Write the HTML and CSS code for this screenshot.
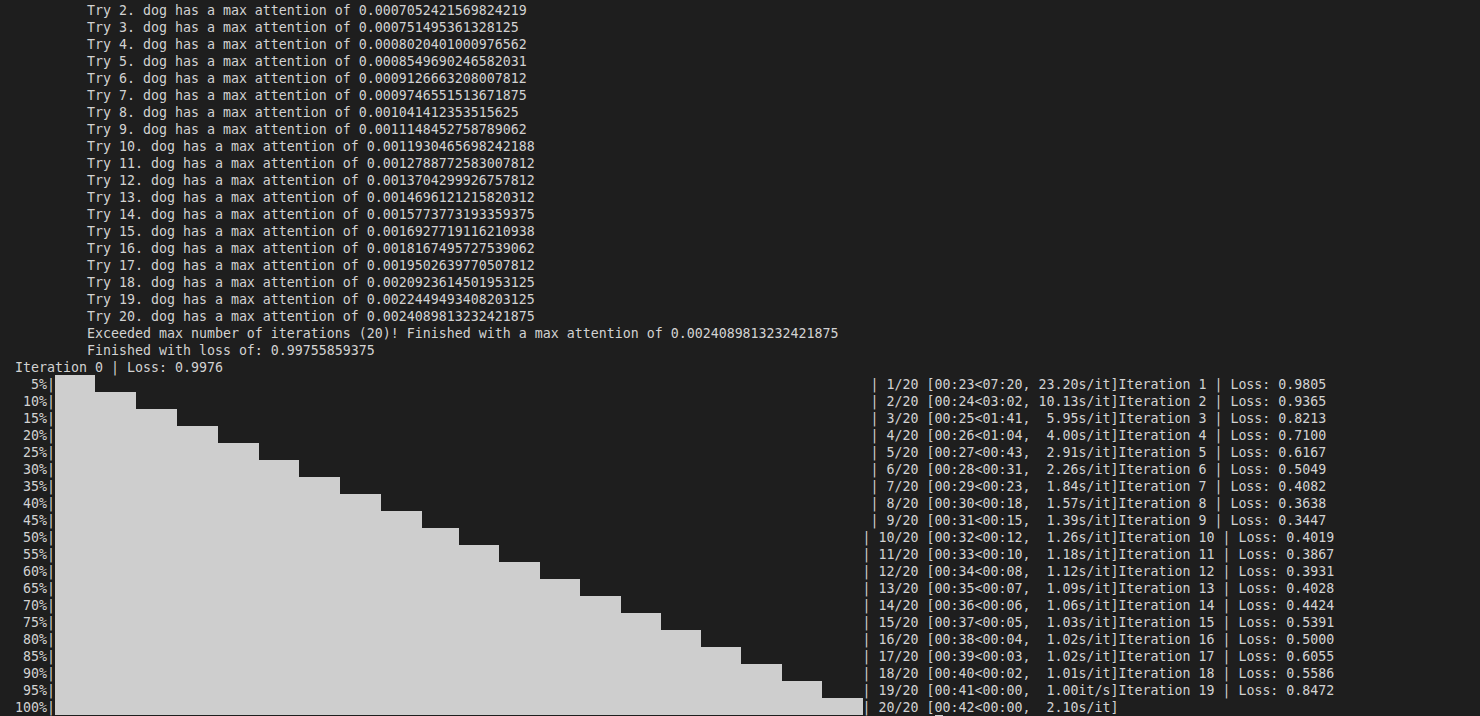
FILE: index.html
```html
<!DOCTYPE html>
<html>
<head>
<meta charset="utf-8">
<link rel="stylesheet" href="styles.css">
</head>
<body>
<div class="term">
<div class="ln ind">Try 2. dog has a max attention of 0.0007052421569824219</div>
<div class="ln ind">Try 3. dog has a max attention of 0.000751495361328125</div>
<div class="ln ind">Try 4. dog has a max attention of 0.0008020401000976562</div>
<div class="ln ind">Try 5. dog has a max attention of 0.0008549690246582031</div>
<div class="ln ind">Try 6. dog has a max attention of 0.0009126663208007812</div>
<div class="ln ind">Try 7. dog has a max attention of 0.0009746551513671875</div>
<div class="ln ind">Try 8. dog has a max attention of 0.001041412353515625</div>
<div class="ln ind">Try 9. dog has a max attention of 0.0011148452758789062</div>
<div class="ln ind">Try 10. dog has a max attention of 0.0011930465698242188</div>
<div class="ln ind">Try 11. dog has a max attention of 0.0012788772583007812</div>
<div class="ln ind">Try 12. dog has a max attention of 0.0013704299926757812</div>
<div class="ln ind">Try 13. dog has a max attention of 0.0014696121215820312</div>
<div class="ln ind">Try 14. dog has a max attention of 0.0015773773193359375</div>
<div class="ln ind">Try 15. dog has a max attention of 0.0016927719116210938</div>
<div class="ln ind">Try 16. dog has a max attention of 0.0018167495727539062</div>
<div class="ln ind">Try 17. dog has a max attention of 0.0019502639770507812</div>
<div class="ln ind">Try 18. dog has a max attention of 0.0020923614501953125</div>
<div class="ln ind">Try 19. dog has a max attention of 0.0022449493408203125</div>
<div class="ln ind">Try 20. dog has a max attention of 0.0024089813232421875</div>
<div class="ln ind">Exceeded max number of iterations (20)! Finished with a max attention of 0.0024089813232421875</div>
<div class="ln ind">Finished with loss of: 0.99755859375</div>
<div class="ln">Iteration 0 | Loss: 0.9976</div>
<div class="pr"><span class="tx">  5%|</span><span class="bar b102"><span class="fill" style="width:5ch"></span></span><span class="tx">| 1/20 [00:23&lt;07:20, 23.20s/it]Iteration 1 | Loss: 0.9805</span></div>
<div class="pr"><span class="tx"> 10%|</span><span class="bar b102"><span class="fill" style="width:10.125ch"></span></span><span class="tx">| 2/20 [00:24&lt;03:02, 10.13s/it]Iteration 2 | Loss: 0.9365</span></div>
<div class="pr"><span class="tx"> 15%|</span><span class="bar b102"><span class="fill" style="width:15.25ch"></span></span><span class="tx">| 3/20 [00:25&lt;01:41,  5.95s/it]Iteration 3 | Loss: 0.8213</span></div>
<div class="pr"><span class="tx"> 20%|</span><span class="bar b102"><span class="fill" style="width:20.375ch"></span></span><span class="tx">| 4/20 [00:26&lt;01:04,  4.00s/it]Iteration 4 | Loss: 0.7100</span></div>
<div class="pr"><span class="tx"> 25%|</span><span class="bar b102"><span class="fill" style="width:25.5ch"></span></span><span class="tx">| 5/20 [00:27&lt;00:43,  2.91s/it]Iteration 5 | Loss: 0.6167</span></div>
<div class="pr"><span class="tx"> 30%|</span><span class="bar b102"><span class="fill" style="width:30.5ch"></span></span><span class="tx">| 6/20 [00:28&lt;00:31,  2.26s/it]Iteration 6 | Loss: 0.5049</span></div>
<div class="pr"><span class="tx"> 35%|</span><span class="bar b102"><span class="fill" style="width:35.625ch"></span></span><span class="tx">| 7/20 [00:29&lt;00:23,  1.84s/it]Iteration 7 | Loss: 0.4082</span></div>
<div class="pr"><span class="tx"> 40%|</span><span class="bar b102"><span class="fill" style="width:40.75ch"></span></span><span class="tx">| 8/20 [00:30&lt;00:18,  1.57s/it]Iteration 8 | Loss: 0.3638</span></div>
<div class="pr"><span class="tx"> 45%|</span><span class="bar b102"><span class="fill" style="width:45.875ch"></span></span><span class="tx">| 9/20 [00:31&lt;00:15,  1.39s/it]Iteration 9 | Loss: 0.3447</span></div>
<div class="pr"><span class="tx"> 50%|</span><span class="bar b101"><span class="fill" style="width:50.5ch"></span></span><span class="tx">| 10/20 [00:32&lt;00:12,  1.26s/it]Iteration 10 | Loss: 0.4019</span></div>
<div class="pr"><span class="tx"> 55%|</span><span class="bar b101"><span class="fill" style="width:55.5ch"></span></span><span class="tx">| 11/20 [00:33&lt;00:10,  1.18s/it]Iteration 11 | Loss: 0.3867</span></div>
<div class="pr"><span class="tx"> 60%|</span><span class="bar b101"><span class="fill" style="width:60.625ch"></span></span><span class="tx">| 12/20 [00:34&lt;00:08,  1.12s/it]Iteration 12 | Loss: 0.3931</span></div>
<div class="pr"><span class="tx"> 65%|</span><span class="bar b101"><span class="fill" style="width:65.625ch"></span></span><span class="tx">| 13/20 [00:35&lt;00:07,  1.09s/it]Iteration 13 | Loss: 0.4028</span></div>
<div class="pr"><span class="tx"> 70%|</span><span class="bar b101"><span class="fill" style="width:70.75ch"></span></span><span class="tx">| 14/20 [00:36&lt;00:06,  1.06s/it]Iteration 14 | Loss: 0.4424</span></div>
<div class="pr"><span class="tx"> 75%|</span><span class="bar b101"><span class="fill" style="width:75.75ch"></span></span><span class="tx">| 15/20 [00:37&lt;00:05,  1.03s/it]Iteration 15 | Loss: 0.5391</span></div>
<div class="pr"><span class="tx"> 80%|</span><span class="bar b101"><span class="fill" style="width:80.75ch"></span></span><span class="tx">| 16/20 [00:38&lt;00:04,  1.02s/it]Iteration 16 | Loss: 0.5000</span></div>
<div class="pr"><span class="tx"> 85%|</span><span class="bar b101"><span class="fill" style="width:85.75ch"></span></span><span class="tx">| 17/20 [00:39&lt;00:03,  1.02s/it]Iteration 17 | Loss: 0.6055</span></div>
<div class="pr"><span class="tx"> 90%|</span><span class="bar b101"><span class="fill" style="width:90.875ch"></span></span><span class="tx">| 18/20 [00:40&lt;00:02,  1.01s/it]Iteration 18 | Loss: 0.5586</span></div>
<div class="pr"><span class="tx"> 95%|</span><span class="bar b101"><span class="fill" style="width:95.875ch"></span></span><span class="tx">| 19/20 [00:41&lt;00:00,  1.00it/s]Iteration 19 | Loss: 0.8472</span></div>
<div class="pr"><span class="tx">100%|</span><span class="bar b101"><span class="fill" style="width:101ch"></span></span><span class="tx">| 20/20 [00:42&lt;00:00,  2.10s/it]</span></div>
<div class="cur-line"><span class="cursor"></span></div>
</div>
</body>
</html>
```
FILE: styles.css
```css
html, body {
  margin: 0;
  padding: 0;
  background: #1e1e1e;
  height: 100%;
  overflow: hidden;
}
.term {
  padding: 1px 0 0 15px;
  font-family: "DejaVu Sans Mono", "Liberation Mono", monospace;
  font-size: 13.29px;
  line-height: 17px;
  color: #d2d2d2;
}
.ln {
  height: 16px;
  padding-top: 1px;
  white-space: pre;
}
.ind {
  padding-left: 9ch;
}
.pr {
  display: flex;
  height: 17px;
  white-space: pre;
}
.tx {
  display: block;
  height: 16px;
  padding-top: 1px;
}
.bar {
  display: block;
  height: 17px;
  flex: none;
}
.b102 { width: 102ch; }
.b101 { width: 101ch; }
.fill {
  display: block;
  height: 17px;
  background: #cecece;
}
.cur-line {
  height: 17px;
  padding-left: 115ch;
}
.cursor {
  display: block;
  width: 1ch;
  height: 17px;
  background: #cecece;
}
```
